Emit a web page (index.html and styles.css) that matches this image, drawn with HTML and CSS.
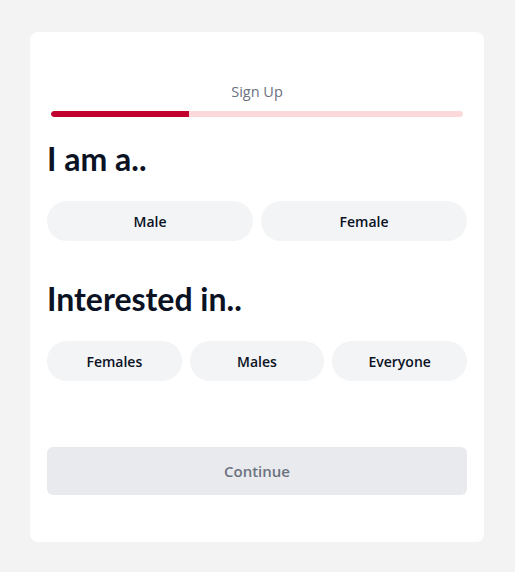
FILE: index.html
```html
<!DOCTYPE html>
<html lang="en">
<head>
<meta charset="utf-8">
<title>Sign Up</title>
<link rel="stylesheet" href="styles.css">
</head>
<body>
<main class="card">
  <div class="step-label">Sign Up</div>
  <div class="progress"><div class="progress-fill" style="width: 33.5%"></div></div>
  <h2 class="heading">I am a..</h2>
  <div class="options options-2">
    <button class="option">Male</button>
    <button class="option">Female</button>
  </div>
  <h2 class="heading heading-second">Interested in..</h2>
  <div class="options options-3">
    <button class="option">Females</button>
    <button class="option">Males</button>
    <button class="option">Everyone</button>
  </div>
  <button class="continue" disabled>Continue</button>
</main>
</body>
</html>
```
FILE: styles.css
```css
* { box-sizing: border-box; }
html, body { margin: 0; }
body {
  background: #f3f3f3;
  width: 515px;
  height: 572px;
  padding: 32px 31px 30px 30px;
  font-family: "Open Sans", "Noto Sans", sans-serif;
}
.card {
  background: #ffffff;
  border-radius: 8px;
  height: 510px;
  padding: 50px 17px 0 17px;
  display: flex;
  flex-direction: column;
}
.step-label {
  text-align: center;
  font-size: 14.5px;
  line-height: 20px;
  color: #6b7280;
  font-family: "Open Sans", sans-serif;
}
.progress {
  margin: 9px 4px 0 4px;
  height: 6px;
  border-radius: 3px;
  background: #fbd9da;
  overflow: hidden;
}
.progress-fill {
  height: 100%;
  background: #c1002f;
  border-radius: 3px 0 0 3px;
}
.heading {
  margin: 22px 0 0 0;
  font-family: Lato, sans-serif;
  font-weight: 700;
  font-size: 32px;
  line-height: 40px;
  color: #0a1224;
}
.heading-second { margin-top: 38px; }
.options {
  display: grid;
  gap: 8px;
  margin-top: 22px;
}
.options-2 { grid-template-columns: 1fr 1fr; }
.options-3 { grid-template-columns: 1fr 1fr 1fr; }
.option {
  height: 40px;
  border: none;
  border-radius: 20px;
  background: #f3f4f6;
  font-family: "Open Sans", sans-serif;
  font-weight: 600;
  font-size: 14px;
  color: #0a1224;
  padding: 0;
}
.continue {
  margin-top: 66px;
  height: 48px;
  border: none;
  border-radius: 6px;
  background: #e8eaed;
  color: #6b7280;
  font-family: "Open Sans", sans-serif;
  font-weight: 600;
  font-size: 15px;
  padding: 0;
}
```
